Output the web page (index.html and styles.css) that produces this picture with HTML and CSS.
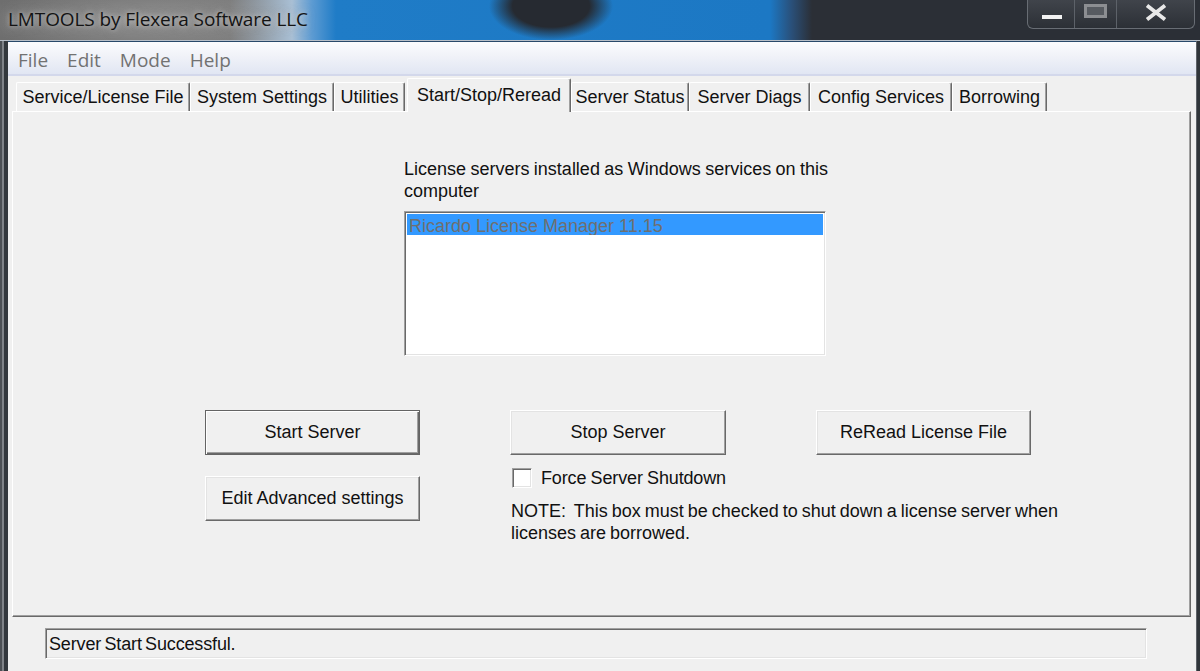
FILE: index.html
```html
<!DOCTYPE html>
<html lang="en">
<head>
<meta charset="utf-8">
<title>LMTOOLS by Flexera Software LLC</title>
<link rel="stylesheet" href="styles.css">
</head>
<body>
<div class="window">
  <div class="titlebar">
    <div class="title">LMTOOLS by Flexera Software LLC</div>
    <div class="controls">
      <div class="ctl ctl-min"><span class="min-bar"></span></div>
      <div class="ctl ctl-max"><span class="max-box"></span></div>
      <div class="ctl ctl-close">
        <svg class="close-x" width="22" height="17" viewBox="0 0 22 17"><path d="M2 1.5 L20 15.5 M20 1.5 L2 15.5" stroke="#e8e8e8" stroke-width="3.8" stroke-linecap="butt" fill="none"/></svg>
      </div>
    </div>
  </div>
  <div class="frame">
    <div class="edge-left"></div>
    <div class="client">
      <div class="menubar">
        <span class="menu-item">File</span>
        <span class="menu-item">Edit</span>
        <span class="menu-item">Mode</span>
        <span class="menu-item">Help</span>
      </div>
      <div class="tabstrip">
        <div class="tab tab-service">Service/License File</div>
        <div class="tab tab-system">System Settings</div>
        <div class="tab tab-utilities">Utilities</div>
        <div class="tab tab-start selected">Start/Stop/Reread</div>
        <div class="tab tab-status">Server Status</div>
        <div class="tab tab-diags">Server Diags</div>
        <div class="tab tab-config">Config Services</div>
        <div class="tab tab-borrow">Borrowing</div>
      </div>
      <div class="panel">
        <div class="services">
          <div class="services-label">License servers installed as Windows services on this computer</div>
          <div class="listbox">
            <div class="list-row selected-row">Ricardo License Manager 11.15</div>
          </div>
        </div>
        <div class="actions">
          <div class="btn btn-default">Start Server</div>
          <div class="btn">Stop Server</div>
          <div class="btn">ReRead License File</div>
          <div class="btn btn-edit">Edit Advanced settings</div>
          <div class="force">
            <div class="check-line">
              <span class="checkbox"></span>
              <span class="check-label">Force Server Shutdown</span>
            </div>
            <div class="note">NOTE:&nbsp; This box must be checked to shut down a license server when licenses are borrowed.</div>
          </div>
        </div>
      </div>
      <div class="statusbar">
        <div class="status-field">Server Start Successful.</div>
      </div>
    </div>
    <div class="edge-right"></div>
  </div>
</div>
</body>
</html>
```
FILE: styles.css
```css
* { box-sizing: border-box; }
html, body { margin: 0; padding: 0; }
body {
  width: 1200px;
  height: 671px;
  overflow: hidden;
  background: #2b2f36;
  font-family: "Liberation Sans", Arial, sans-serif;
  color: #111;
}
.window {
  width: 1200px;
  height: 671px;
  display: flex;
  flex-direction: column;
}

/* title bar */
.titlebar {
  height: 41px;
  flex: none;
  display: flex;
  justify-content: space-between;
  align-items: flex-start;
  border-bottom: 1px solid #b7bfc8;
  background:
    radial-gradient(ellipse 62px 34px at 551px 6px, #262a31 0, #262a31 62%, rgba(38,42,49,0) 100%),
    radial-gradient(ellipse 170px 30px at 140px 20px, rgba(170,170,170,0.55) 0, rgba(170,170,170,0) 100%),
    linear-gradient(90deg, #6e6e6e 0, #7a7a7a 230px, #a9bfd4 292px, #5d9bd2 312px, #1f7cc7 336px, #1c78c4 770px, #2a4f78 792px, #2b2f36 812px, #2b2f36 100%);
}
.title {
  font-family: "Open Sans", "Noto Sans", sans-serif;
  font-size: 19px;
  color: #141414;
  padding-left: 8px;
  line-height: 38px;
  letter-spacing: -0.1px;
  text-shadow: 0 0 5px rgba(210,210,210,0.8), 0 0 10px rgba(200,200,200,0.5);
}
.controls {
  display: flex;
  margin-right: 5px;
  height: 29px;
  border: 1px solid #686d74;
  border-top: none;
  border-radius: 0 0 6px 6px;
  overflow: hidden;
  background: linear-gradient(#40444b, #2c3036);
}
.ctl {
  height: 28px;
  display: flex;
  justify-content: center;
  align-items: flex-start;
}
.ctl-min { width: 47px; border-right: 1px solid #5d6269; }
.ctl-max { width: 42px; border-right: 1px solid #5d6269; }
.ctl-close { width: 77px; }
.min-bar {
  width: 20px;
  height: 4px;
  margin-top: 15px;
  margin-left: 2px;
  background: #f2f2f2;
}
.max-box {
  width: 23px;
  height: 14px;
  margin-top: 4px;
  border: 3px solid #8c8e92;
  background: #575b61;
}
.close-x { margin-top: 4px; margin-left: 1px; }

/* frame */
.frame {
  flex: 1;
  display: flex;
  min-height: 0;
}
.edge-left {
  width: 8px;
  flex: none;
  background: linear-gradient(90deg, #4c5055 0, #4c5055 2px, #7f8388 2px, #7f8388 4px, #33383d 4px, #33383d 100%);
}
.edge-right {
  width: 4px;
  flex: none;
  background: linear-gradient(90deg, #5d6268 0, #5d6268 1px, #30353a 1px, #30353a 100%);
}
.client {
  flex: 1;
  display: flex;
  flex-direction: column;
  background: #f0f0f0;
  border-top: 1px solid #29496a;
}

/* menu */
.menubar {
  height: 34px;
  flex: none;
  display: flex;
  align-items: center;
  gap: 19px;
  padding: 4px 0 0 10px;
  background: linear-gradient(#fbfcfe 0, #f0f2f8 45%, #e1e6f3 100%);
  border-bottom: 2px solid #d3d8eb;
}
.menu-item {
  font-family: "Open Sans", "Noto Sans", sans-serif;
  font-size: 19px;
  color: #727272;
}

/* tabs */
.tabstrip {
  height: 35px;
  flex: none;
  display: flex;
  align-items: flex-end;
  padding-left: 8px;
}
.tab {
  height: 29px;
  font-size: 18px;
  line-height: 28px;
  text-align: center;
  white-space: nowrap;
  color: #111;
  background: #f0f0f0;
  border-top: 1px solid #fff;
  border-left: 1px solid #fff;
  border-right: 1px solid #696969;
  box-shadow: inset -1px 0 #a0a0a0;
  border-radius: 2px 2px 0 0;
}
.tab-service { width: 174px; }
.tab-system { width: 144px; }
.tab-utilities { width: 71px; margin-right: 2px; }
.tab-start { width: 164px; }
.tab-status { width: 118px; }
.tab-diags { width: 121px; }
.tab-config { width: 142px; }
.tab-borrow { width: 95px; }
.tab.selected {
  height: 34px;
  line-height: 33px;
  margin-bottom: -1px;
  position: relative;
  z-index: 1;
}

/* panel */
.panel {
  height: 506px;
  flex: none;
  margin: 0 5px 0 4px;
  border-top: 1px solid #fff;
  border-left: 1px solid #fff;
  border-right: 1px solid #696969;
  border-bottom: 1px solid #696969;
  box-shadow: inset -1px -1px #a0a0a0;
  padding-top: 46px;
}
.services {
  margin-left: 391px;
}
.services-label {
  width: 440px;
  font-size: 18px;
  line-height: 22px;
  word-spacing: -0.6px;
}
.listbox {
  width: 422px;
  height: 145px;
  margin-top: 9px;
  background: #fff;
  border-top: 1px solid #a0a0a0;
  border-left: 1px solid #a0a0a0;
  border-right: 1px solid #fff;
  border-bottom: 1px solid #fff;
  box-shadow: inset 1px 1px #696969, inset -1px -1px #e3e3e3;
  padding: 2px;
}
.list-row {
  height: 21px;
  font-size: 18px;
  line-height: 24px;
  padding-left: 2px;
  white-space: nowrap;
  overflow: hidden;
}
.selected-row {
  background: #3399ff;
  color: #6f6f6f;
}

/* buttons */
.actions {
  display: grid;
  grid-template-columns: 215px 216px 215px;
  column-gap: 90px;
  align-items: start;
  margin: 54px 0 0 192px;
}
.btn {
  height: 45px;
  display: flex;
  align-items: center;
  justify-content: center;
  font-size: 18px;
  color: #111;
  background: #f0f0f0;
  border-top: 1px solid #fff;
  border-left: 1px solid #fff;
  border-right: 1px solid #696969;
  border-bottom: 1px solid #696969;
  box-shadow: inset -1px -1px #a0a0a0, inset 1px 1px #e3e3e3;
  white-space: nowrap;
}
.btn-default {
  border: 1px solid #646464;
  box-shadow: inset 1px 1px #fff, inset -1px -1px #696969, inset -2px -2px #a0a0a0;
}
.btn-edit {
  margin-top: 21px;
}
.force {
  grid-column: 2 / 4;
  margin-top: 12px;
}
.check-line {
  height: 22px;
  display: flex;
  align-items: center;
  gap: 9px;
  padding-left: 2px;
}
.checkbox {
  width: 20px;
  height: 20px;
  flex: none;
  background: #fff;
  border-top: 1px solid #a0a0a0;
  border-left: 1px solid #a0a0a0;
  border-right: 1px solid #fff;
  border-bottom: 1px solid #fff;
  box-shadow: inset 1px 1px #696969, inset -1px -1px #e3e3e3;
}
.check-label {
  font-size: 18px;
  letter-spacing: -0.15px;
  word-spacing: -0.5px;
}
.note {
  margin: 11px 0 0 1px;
  width: 575px;
  font-size: 18px;
  line-height: 22px;
  word-spacing: -1px;
}

/* status */
.statusbar {
  flex: 1;
  padding: 11px 0 0 37px;
}
.status-field {
  width: 1102px;
  height: 31px;
  font-size: 18px;
  line-height: 31px;
  padding-left: 3px;
  letter-spacing: -0.15px;
  word-spacing: -1.5px;
  white-space: nowrap;
  border-top: 1px solid #a0a0a0;
  border-left: 1px solid #a0a0a0;
  border-right: 1px solid #fff;
  border-bottom: 1px solid #fff;
  box-shadow: inset 1px 1px #696969, inset -1px -1px #e3e3e3;
}
```
